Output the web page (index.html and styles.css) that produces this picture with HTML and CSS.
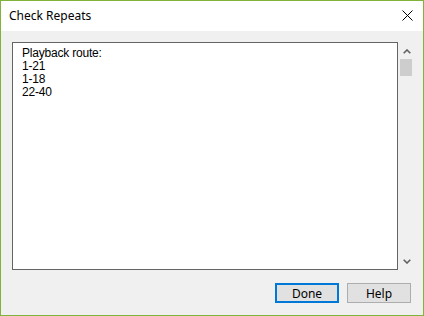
FILE: index.html
```html
<!DOCTYPE html>
<html>
<head>
<meta charset="utf-8">
<link rel="stylesheet" href="styles.css">
</head>
<body>
<div class="window">
  <div class="titlebar">
    <span class="title">Check Repeats</span>
    <svg class="close" width="11" height="11" viewBox="0 0 11 11"><path d="M0.5 0.5 L10.5 10.5 M10.5 0.5 L0.5 10.5" stroke="#000" stroke-width="1" fill="none"/></svg>
  </div>
  <div class="content">
    <div class="listrow">
      <div class="textbox">
        <div class="line">Playback route:</div>
        <div class="line">1-21</div>
        <div class="line">1-18</div>
        <div class="line">22-40</div>
      </div>
      <div class="scrollbar">
        <svg class="arrow up" width="8" height="5" viewBox="0 0 8 5"><path d="M0.7 4.3 L4 1 L7.3 4.3" stroke="#606060" stroke-width="1.6" fill="none"/></svg>
        <div class="thumb"></div>
        <div class="spacer"></div>
        <svg class="arrow down" width="8" height="5" viewBox="0 0 8 5"><path d="M0.7 0.7 L4 4 L7.3 0.7" stroke="#606060" stroke-width="1.6" fill="none"/></svg>
      </div>
    </div>
    <div class="buttons">
      <div class="btn default">Done</div>
      <div class="btn">Help</div>
    </div>
  </div>
</div>
</body>
</html>
```
FILE: styles.css
```css
html, body {
  margin: 0;
  padding: 0;
}
.window {
  width: 424px;
  height: 316px;
  box-sizing: border-box;
  border: 1px solid #7fb33b;
  background: #f0f0f0;
  display: flex;
  flex-direction: column;
  font-family: "Segoe UI", "Noto Sans", sans-serif;
}
.titlebar {
  height: 30px;
  background: #fff;
  display: flex;
  align-items: center;
  justify-content: space-between;
  padding: 0 10px 0 8px;
}
.title {
  font-size: 12px;
  color: #000;
  margin-top: -1px;
}
.close {
  display: block;
  margin-top: -1px;
}
.content {
  flex: 1;
  display: flex;
  flex-direction: column;
  padding: 11px 8px 12px 11px;
  gap: 13px;
}
.listrow {
  height: 228px;
  display: flex;
}
.textbox {
  flex: 1;
  box-sizing: border-box;
  border: 1px solid #646464;
  background: #fff;
  padding: 4px 9px;
  font-family: "Liberation Sans", Arial, sans-serif;
  font-size: 12px;
  letter-spacing: -0.2px;
  line-height: 13px;
  color: #000;
}
.scrollbar {
  width: 17px;
  display: flex;
  flex-direction: column;
  align-items: center;
  padding-top: 7px;
  padding-bottom: 6px;
}
.arrow {
  display: block;
}
.thumb {
  width: 12px;
  height: 17px;
  margin-top: 5px;
  margin-left: -2px;
  background: #cdcdcd;
}
.spacer {
  flex: 1;
}
.buttons {
  display: flex;
  justify-content: flex-end;
  gap: 8px;
  padding-right: 4px;
}
.btn {
  width: 64px;
  height: 20px;
  box-sizing: border-box;
  border: 1px solid #adadad;
  background: #e1e1e1;
  font-size: 12px;
  display: flex;
  align-items: center;
  justify-content: center;
  color: #000;
}
.btn.default {
  border: 2px solid #0078d7;
}
```
